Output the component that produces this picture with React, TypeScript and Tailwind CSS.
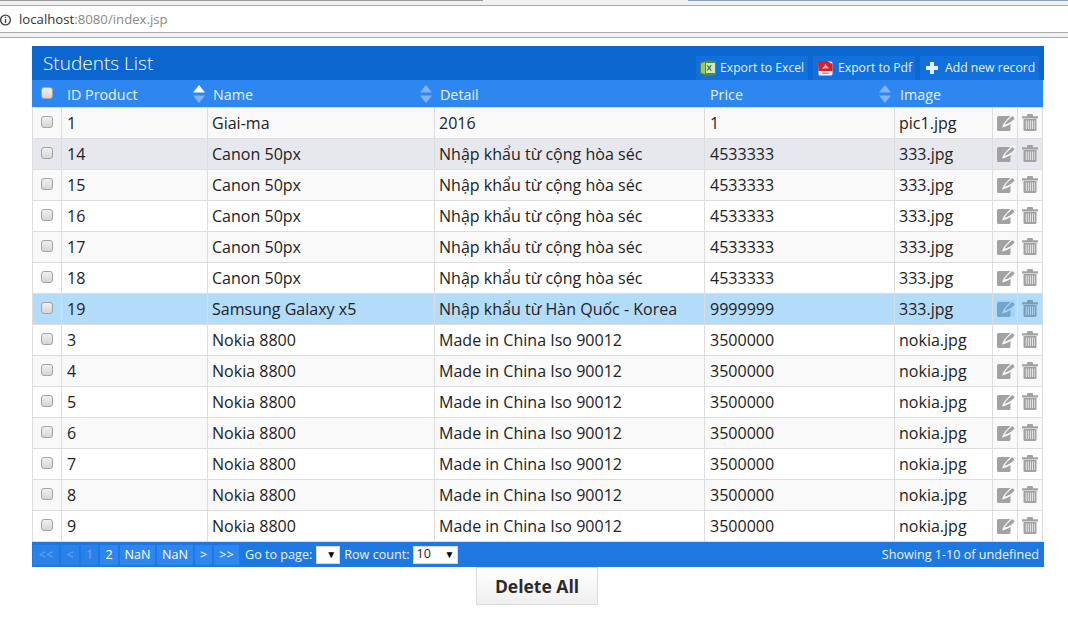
import React from "react";

type Row = { id: string; name: string; detail: string; price: string; image: string; bg: string; active?: boolean };

const canon = { name: "Canon 50px", detail: "Nhập khẩu từ cộng hòa séc", price: "4533333", image: "333.jpg" };
const nokia = { name: "Nokia 8800", detail: "Made in China Iso 90012", price: "3500000", image: "nokia.jpg" };

const rows: Row[] = [
  { id: "1", name: "Giai-ma", detail: "2016", price: "1", image: "pic1.jpg", bg: "bg-[#f9f9f9]" },
  { id: "14", ...canon, bg: "bg-[#e7e8ed]" },
  { id: "15", ...canon, bg: "bg-[#f9f9f9]" },
  { id: "16", ...canon, bg: "bg-white" },
  { id: "17", ...canon, bg: "bg-[#f9f9f9]" },
  { id: "18", ...canon, bg: "bg-white" },
  { id: "19", name: "Samsung Galaxy x5", detail: "Nhập khẩu từ Hàn Quốc - Korea", price: "9999999", image: "333.jpg", bg: "bg-[#b3dcfb]", active: true },
  { id: "3", ...nokia, bg: "bg-white" },
  { id: "4", ...nokia, bg: "bg-[#f9f9f9]" },
  { id: "5", ...nokia, bg: "bg-white" },
  { id: "6", ...nokia, bg: "bg-[#f9f9f9]" },
  { id: "7", ...nokia, bg: "bg-white" },
  { id: "8", ...nokia, bg: "bg-[#f9f9f9]" },
  { id: "9", ...nokia, bg: "bg-white" },
];

const EditIcon = ({ active }: { active?: boolean }) => {
  const fill = active ? "#74a3cd" : "#a2a2a2";
  const halo = active ? "#a6d3f7" : "#f8f8f8";
  return (
    <svg width="18" height="17" viewBox="0 0 18 17">
      <path d="M0 3.500a1.500 1.500 0 0 1 1.500-1.500H13.500V15.500a1.500 1.500 0 0 1-1.500 1.500H1.500A1.500 1.500 0 0 1 0 15.500z" fill={fill} />
      <path d="M5 13.500C6 9.500 9 6 14 1.500L18 0V6C14 10 10 12.500 5 13.500z" fill={halo} />
      <path d="M7.500 10.500C9 8 11 6 14.500 2.800a1.200 1.200 0 0 1 1.700 0l.8.800a1.200 1.200 0 0 1 0 1.700C14 8.500 11 10 7.500 10.500z" fill={fill} />
    </svg>
  );
};

const TrashIcon = ({ active }: { active?: boolean }) => {
  const fill = active ? "#7b9db8" : "#a2a2a2";
  const line = active ? "#b3dcfb" : "#ececec";
  return (
    <svg width="16" height="17" viewBox="0 0 16 17">
      <path d="M0 2.200h5V1a1 1 0 0 1 1-1h4a1 1 0 0 1 1 1v1.200h5V4.500H0z" fill={fill} />
      <path d="M1.500 5h13v10.500a1.500 1.500 0 0 1-1.500 1.500H3a1.500 1.500 0 0 1-1.500-1.500z" fill={fill} />
      <path d="M3.800 6.500h.9V15h-.9zM5.900 6.500h.9V15h-.9zM8 6.500h.9V15H8zM10.100 6.500h.9V15h-.9zM12.100 6.500h.7V15h-.7z" fill={line} />
    </svg>
  );
};

const ExcelIcon = () => (
  <svg width="16" height="16" viewBox="0 0 16 16">
    <path d="M0 2.500L6 0.500 15 1l1 1v12l-1 1-9 0.800-6-2z" fill="#4f8f35" />
    <path d="M6 3h9v10H6z" fill="#d3e6bf" />
    <path d="M6.500 5.500l1.500-.2 1.200 1.800 1.100-1.800 1.500-.1-1.800 2.700 1.900 2.800-1.500-.1-1.200-1.800-1.200 1.800H6.500l1.900-2.800z" fill="#2f7a2f" />
    <path d="M1 3.500l4-1.500v12l-4-1.200z" fill="#9dc46e" />
  </svg>
);

const PdfIcon = () => (
  <svg width="15" height="15" viewBox="0 0 15 15">
    <rect x="0.500" y="0.500" width="14" height="14" rx="1.500" fill="#f7f1f1" />
    <path d="M0 0h9l5.500 3v7h-14z" fill="#d8202a" />
    <path d="M7.500 2.500C7 4.500 5.500 6.500 3.500 8c2.500-.8 5.500-1 8-.6-1.800-1.200-3.300-3-4-4.900z" fill="#f3c6c6" />
    <path d="M4 11.500h7v1.500H4z" fill="#e28b8b" />
  </svg>
);

const PlusIcon = () => (
  <svg width="12" height="12" viewBox="0 0 12 12">
    <path d="M4 0h4v4h4v4H8v4H4V8H0V4h4z" fill="#e6eef8" />
  </svg>
);

const SortIcon = ({ up }: { up?: boolean }) => (
  <svg width="12" height="18" viewBox="0 0 12 18">
    <path d="M6 0l6 7.500H0z" fill={up ? "#ffffff" : "#7fb4f5"} />
    <path d="M6 18l6-7.500H0z" fill="#7fb4f5" />
  </svg>
);

const Check = () => (
  <span className="block w-[12px] h-[12px] rounded-[3px] border border-[#a3a3a3] bg-gradient-to-b from-[#f0f0f0] to-[#d6d6d6]" />
);

const HeadCell = ({ label, sort, up, pad }: { label: string; sort?: boolean; up?: boolean; pad: string }) => (
  <div className={`flex items-center justify-between ${pad}`}>
    <span className="pt-[2px]">{label}</span>
    {sort && <SortIcon up={up} />}
  </div>
);

const PageBtn = ({ label, off, w }: { label: string; off?: boolean; w: string }) => (
  <span className={`h-[20px] text-center leading-[20px] ${w} ${off ? "bg-[#2b81ea] text-[#6eaaf0]" : "bg-[#2e87f0] text-white"}`}>{label}</span>
);

const Select = ({ label, w }: { label?: string; w: string }) => (
  <span className={`flex items-center justify-between h-[18px] bg-white border border-[#d8d8d8] text-[#222] ${w}`}>
    <span>{label}</span>
    <span className="text-[10px] text-black">▼</span>
  </span>
);

const TopButton = ({ icon, label, w }: { icon: React.ReactNode; label: string; w: string }) => (
  <div className={`flex items-center h-[24px] bg-[#1170dc] whitespace-nowrap ${w}`}>
    {icon}
    <span>{label}</span>
  </div>
);

export default function App() {
  return (
    <div className="w-[1068px] h-[618px] overflow-hidden bg-white font-['Open_Sans',sans-serif] text-[#222]">
      <div className="h-[38px] bg-white border-b border-[#acacac]">
        <div className="flex h-[1px]">
          <div className="w-[483px] bg-[#9a9a9a]" />
          <div className="w-[205px] bg-[#f1f1f1]" />
          <div className="flex-1 bg-[#8ba3c0]" />
        </div>
        <div className="h-[5px] bg-[#f1f1f1] border-b border-[#acacac]" />
        <div className="flex items-center h-[26px] gap-[7px] pt-[1px] text-[13.200px]">
          <svg width="12" height="12" viewBox="0 0 12 12" className="shrink-0">
            <circle cx="5.500" cy="6" r="4.900" fill="none" stroke="#444" strokeWidth="1.400" />
            <path d="M4.800 5h1.400v4H4.800zM4.800 2.700h1.400v1.400H4.800z" fill="#444" />
          </svg>
          <span className="text-[#333]">
            localhost<span className="text-[#888]">:8080/index.jsp</span>
          </span>
        </div>
        <div className="h-[5px] bg-[#f1f1f1] border-t border-[#acacac]" />
      </div>

      <div className="w-[1012px] ml-[32px] mt-[8px]">
        <div className="flex items-end justify-between h-[34px] bg-[#0b67cf] text-white">
          <span className="pl-[11px] pb-[3px] text-[19px] leading-[28px] font-light">Students List</span>
          <div className="flex gap-[5px] pr-[5px] text-[12.200px] text-[#e6f0fc]">
            <TopButton icon={<ExcelIcon />} label="Export to Excel" w="w-[112px] pl-[4px] gap-[4px]" />
            <TopButton icon={<PdfIcon />} label="Export to Pdf" w="w-[102px] pl-[5px] gap-[5px]" />
            <TopButton icon={<PlusIcon />} label="Add new record" w="w-[119px] pl-[6px] gap-[7px]" />
          </div>
        </div>

        <div className="flex items-center h-[27px] w-[1011px] bg-[#2e87f0] text-[14.300px] text-[#e9f2fd]">
          <div className="w-[30px] pl-[9px] pb-[2px]"><Check /></div>
          <div className="w-[146px]"><HeadCell label="ID Product" sort up pad="pl-[5px] pr-[3px]" /></div>
          <div className="w-[227px]"><HeadCell label="Name" sort pad="pl-[5px] pr-[3px]" /></div>
          <div className="w-[270px]"><HeadCell label="Detail" pad="pl-[5px]" /></div>
          <div className="w-[190px]"><HeadCell label="Price" sort pad="pl-[5px] pr-[4px]" /></div>
          <div className="w-[100px]"><HeadCell label="Image" pad="pl-[5px]" /></div>
        </div>

        <div className="w-[1011px] border-t border-[#dddddd]">
          {rows.map((row) => (
            <div
              key={row.id}
              className={`grid grid-cols-[30px_146px_227px_270px_190px_98px_25px_25px] h-[31px] border-b border-[#dddddd] text-[16.050px] leading-[30px] text-[#222] ${row.bg}`}
            >
              <div className="flex items-center justify-center border-x border-[#dddddd] pb-[2px]"><Check /></div>
              <div className="pl-[5px] border-r border-[#dddddd]">{row.id}</div>
              <div className="pl-[4px] border-r border-[#dddddd]">{row.name}</div>
              <div className="pl-[4px] border-r border-[#dddddd]">{row.detail}</div>
              <div className="pl-[5px] border-r border-[#dddddd]">{row.price}</div>
              <div className="pl-[4px] border-r border-[#dddddd]">{row.image}</div>
              <div className="flex items-center justify-center border-r border-[#dddddd] pb-[1px] pl-[1px]">
                <span className={`flex rounded-[2px] ${row.active ? "bg-[#a6d3f7]" : ""}`}><EditIcon active={row.active} /></span>
              </div>
              <div className="flex items-center justify-center border-r border-[#dddddd] pb-[1px]"><TrashIcon active={row.active} /></div>
            </div>
          ))}
        </div>

        <div className="flex items-center justify-between h-[25px] bg-[#1f78e1] pl-[1px] pr-[5px] text-[12.600px] text-[#e9f2fd] whitespace-nowrap">
          <div className="flex items-center gap-[2px]">
            <PageBtn label="<<" off w="w-[26px]" />
            <PageBtn label="<" off w="w-[18px]" />
            <PageBtn label="1" off w="w-[17px]" />
            <PageBtn label="2" w="w-[18px]" />
            <PageBtn label="NaN" w="w-[35px]" />
            <PageBtn label="NaN" w="w-[36px]" />
            <PageBtn label=">" w="w-[17px]" />
            <PageBtn label=">>" w="w-[25px]" />
            <span className="ml-[4px] pt-[1px]">Go to page:</span>
            <Select w="w-[24px] ml-[2px] pr-[3px]" />
            <span className="ml-[2px] pt-[1px]">Row count:</span>
            <Select label="10" w="w-[45px] ml-[1px] pl-[3px] pr-[2px]" />
          </div>
          <span className="pt-[1px]">Showing 1-10 of undefined</span>
        </div>

        <div className="flex justify-center pr-[2px]">
          <button className="w-[122px] h-[38px] border border-[#dcdcdc] bg-gradient-to-b from-white to-[#efefef] text-[17.500px] font-bold text-[#2b2b2b]">
            Delete All
          </button>
        </div>
      </div>
    </div>
  );
}
